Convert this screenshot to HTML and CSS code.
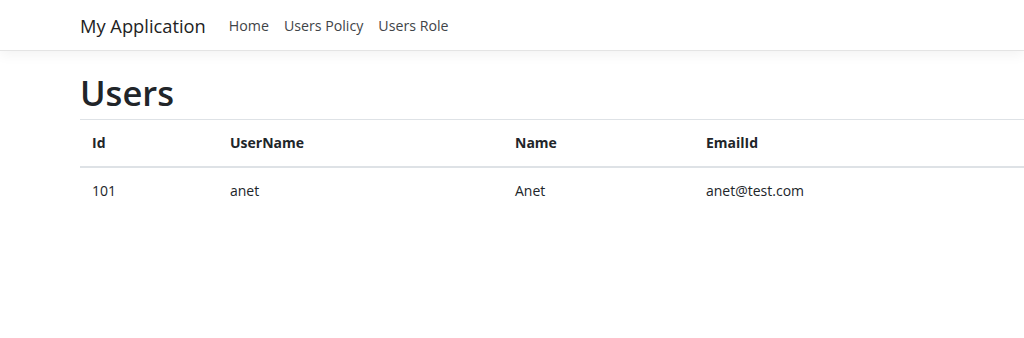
FILE: index.html
```html
<!DOCTYPE html>
<html>
<head>
<meta charset="utf-8">
<link rel="stylesheet" href="styles.css">
</head>
<body>
<header class="navbar">
  <div class="nav-inner">
    <a class="brand" href="#">My Application</a>
    <nav class="links">
      <a href="#">Home</a>
      <a href="#">Users Policy</a>
      <a href="#">Users Role</a>
    </nav>
  </div>
</header>
<main class="content">
  <h1>Users</h1>
  <table class="table">
    <thead>
      <tr><th class="c1">Id</th><th class="c2">UserName</th><th class="c3">Name</th><th class="c4">EmailId</th></tr>
    </thead>
    <tbody>
      <tr><td>101</td><td>anet</td><td>Anet</td><td>anet@test.com</td></tr>
    </tbody>
  </table>
</main>
</body>
</html>
```
FILE: styles.css
```css
* { box-sizing: border-box; }
html, body { margin: 0; padding: 0; background: #fff; }
body {
  font-family: "Open Sans", "Noto Sans", sans-serif;
  font-size: 14px;
  color: #212529;
  overflow: hidden;
}
.navbar {
  height: 51px;
  background: #fff;
  border-bottom: 1px solid #e4e4e4;
  box-shadow: 0 4px 12px rgba(0,0,0,0.05);
}
.nav-inner {
  display: flex;
  align-items: center;
  height: 50px;
  padding-left: 80px;
}
.brand {
  font-size: 18.3px;
  color: #222;
  text-decoration: none;
  margin-right: 23px;
}
.links { display: flex; gap: 15px; }
.links a {
  font-size: 14.2px;
  color: #3f4448;
  text-decoration: none;
}
.content { padding-left: 80px; }
h1 {
  margin: 20px 0 0 0;
  font-size: 34.5px;
  font-weight: 600;
  line-height: 44px;
  height: 48px;
  color: #212529;
}
.table {
  width: 944px;
  border-collapse: collapse;
  table-layout: fixed;
}
.table th, .table td {
  text-align: left;
  padding: 11px 12px;
  line-height: 24px;
  border-top: 1px solid #dee2e6;
}
.table th { font-weight: 700; border-bottom: 2px solid #dee2e6; }
.table td { border-top: none; }
.c1 { width: 138px; }
.c2 { width: 285px; }
.c3 { width: 191px; }
```
